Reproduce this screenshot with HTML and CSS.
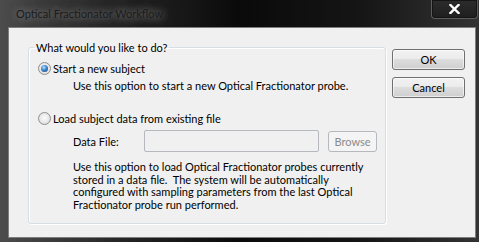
FILE: index.html
```html
<!DOCTYPE html>
<html lang="en">
<head>
    <meta charset="UTF-8">
    <title>Optical Fractionator Workflow</title>
    <link rel="stylesheet" href="styles.css">
</head>
<body>
    <div class="window">
        <!-- Title bar -->
        <div class="titlebar">
            <span class="title">Optical Fractionator Workflow</span>
            <div class="close">
                <svg width="11" height="10" viewBox="0 0 11 10">
                    <path d="M1.5 1 L9.5 9 M9.5 1 L1.5 9" stroke="#fff" stroke-width="2.4" stroke-linecap="square"/>
                </svg>
            </div>
        </div>

        <div class="frame">
            <div class="client">
                <fieldset class="group">
                    <legend>What would you like to do?</legend>
                    <div class="group-body">
                        <label class="option">
                            <input type="radio" name="mode" checked>
                            <span>Start a new subject</span>
                        </label>
                        <p class="desc first">Use this option to start a new Optical Fractionator probe.</p>

                        <label class="option second">
                            <input type="radio" name="mode">
                            <span>Load subject data from existing file</span>
                        </label>
                        <div class="file-row">
                            <span class="file-label">Data File:</span>
                            <input type="text" class="file-input" disabled>
                            <button class="browse" disabled>Browse</button>
                        </div>
                        <p class="desc long">Use this option to load Optical Fractionator probes currently<br>
                            stored in a data file.&nbsp; The system will be automatically<br>
                            configured with sampling parameters from the last Optical<br>
                            Fractionator probe run performed.</p>
                    </div>
                </fieldset>

                <div class="buttons">
                    <button class="btn default">OK</button>
                    <button class="btn">Cancel</button>
                </div>
            </div>
        </div>
    </div>
</body>
</html>
```

FILE: styles.css
```css
body {
    margin: 0;
    background-color: #1a1a1a;
    font-family: 'Lato', 'Liberation Sans', sans-serif;
    font-size: 11px;
    color: #000;
}
.window {
    width: 479px;
    height: 242px;
    display: flex;
    flex-direction: column;
    background: linear-gradient(90deg, #4c4c4c 0%, #262626 25%, #0a0a0a 50%, #151515 75%, #333 100%);
}
.titlebar {
    height: 27px;
    display: flex;
    justify-content: space-between;
    align-items: flex-start;
    flex-shrink: 0;
}
.title {
    padding-left: 16px;
    line-height: 28px;
    font-size: 11px;
    color: #1c1c1c;
    text-shadow: 0 0 7px #7c7c7c, 0 0 11px #6c6c6c, 0 0 16px #5c5c5c;
}
.close {
    width: 47px;
    height: 19px;
    margin-right: 1px;
    box-sizing: border-box;
    border: 1px solid #5c5c5c;
    border-top: none;
    border-radius: 0 0 4px 4px;
    background: linear-gradient(#2c2c2c, #1e1e1e);
    box-shadow: inset 0 0 0 1px #141414;
    display: flex;
    align-items: center;
    justify-content: center;
}
.frame {
    flex: 1;
    display: flex;
    padding: 0 3px 4px 8px;
}
.client {
    flex: 1;
    display: flex;
    align-items: flex-start;
    background-color: #f0f0f0;
    border: 1px solid #7d7d7d;
    padding: 12px 0 0 19px;
}
.group {
    box-sizing: border-box;
    width: 358px;
    height: 184px;
    margin: 0;
    padding: 0;
    border: 1px solid #d5dfe5;
    border-radius: 3px;
    box-shadow: inset 1px 1px 0 #fff, 1px 1px 0 #fff;
}
.group legend {
    margin-left: 5px;
    padding: 0 2px;
    line-height: 15px;
}
.group-body {
    padding-left: 9px;
}
.option {
    display: flex;
    align-items: center;
    gap: 2px;
    height: 15px;
    margin-top: 6px;
}
.option.second {
    margin-top: 19px;
}
.option input {
    appearance: none;
    margin: 0;
    width: 13px;
    height: 13px;
    box-sizing: border-box;
    border: 1px solid #8f8f8f;
    border-radius: 50%;
    background: radial-gradient(circle at 50% 45%, #fcfcfc 0%, #e8e8e8 55%, #cfcfcf 100%);
    display: flex;
    align-items: center;
    justify-content: center;
}
.option input:checked::after {
    content: "";
    width: 7px;
    height: 7px;
    border-radius: 50%;
    background: radial-gradient(circle at 40% 35%, #b7e0fb 0%, #3c86c8 45%, #0d3b78 100%);
}
.desc {
    margin: 3px 0 0 35px;
    line-height: 13px;
}
.desc.long {
    margin-top: 9px;
    line-height: 12.7px;
}
.file-row {
    display: flex;
    align-items: center;
    margin: 4px 0 0 35px;
}
.file-label {
    width: 71px;
}
.file-input {
    box-sizing: border-box;
    width: 175px;
    height: 22px;
    margin: 0;
    border: 1px solid #b5b9bd;
    border-radius: 2px;
    background-color: #f0f0f0;
}
.browse {
    box-sizing: border-box;
    width: 49px;
    height: 21px;
    margin-left: 9px;
    padding: 0;
    font-family: inherit;
    font-size: 11px;
    color: #8a8a8a;
    border: 1px solid #b5b9bd;
    border-radius: 3px;
    background-color: #f4f4f4;
}
.buttons {
    display: flex;
    flex-direction: column;
    gap: 7px;
    margin: 9px 0 0 6px;
}
.btn {
    box-sizing: border-box;
    width: 73px;
    height: 21px;
    padding: 0;
    font-family: inherit;
    font-size: 11px;
    color: #000;
    border: 1px solid #707070;
    border-radius: 3px;
    background: linear-gradient(#f2f2f2 0%, #ebebeb 49%, #dddddd 50%, #cfcfcf 100%);
    box-shadow: inset 0 0 0 1px rgba(255, 255, 255, 0.6);
}
```
